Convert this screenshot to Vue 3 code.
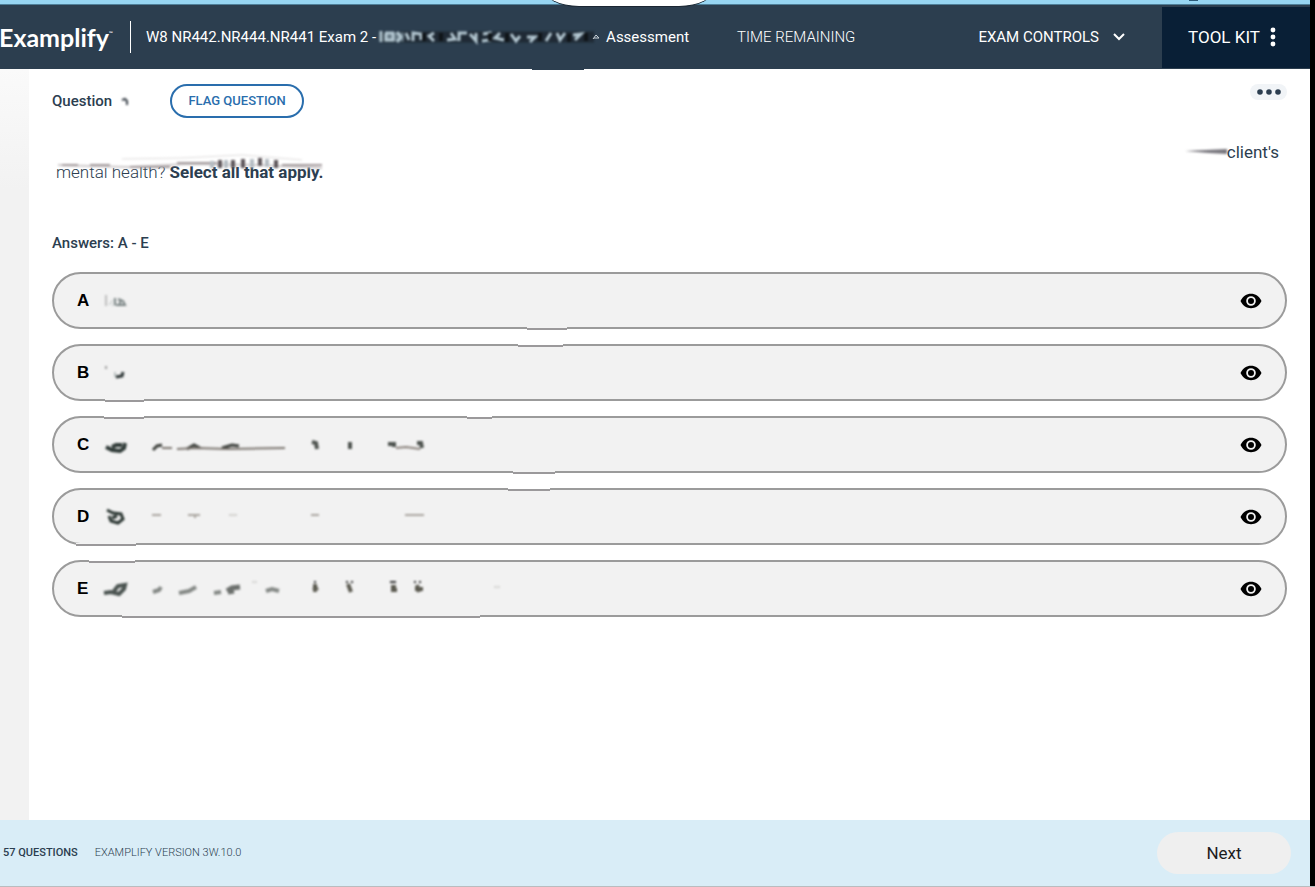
<script setup>
import { ref } from 'vue'

const selected = ref([])

// smears and shifted edges are drawn in the option's own coordinates, 57px tall
const options = [
	{
		letter: 'A',
		edges: [{ x: 475, width: 40, side: 'bottom' }],
		marks: [
			{ d: 'M54 23v11', w: 1, c: '#888' },
			{ d: 'M57 33l4-5M60 33h5', w: 2, c: '#d4d8d8' },
			{ d: 'M63 26v7M66 27l5 2 2 4-9 0M68 28v4', w: 2, c: '#7b8585' },
		],
	},
	{
		letter: 'B',
		edges: [
			{ x: 53, width: 39, side: 'bottom' },
			{ x: 466, width: 45, side: 'top' },
		],
		marks: [
			{ d: 'M54 22v3', w: 1, c: '#555' },
			{ d: 'M63 28v5', w: 2, c: '#bcc4c4' },
			{ d: 'M64 33l6-1 1-4', w: 3, c: '#2e3737' },
		],
	},
	{
		letter: 'C',
		edges: [
			{ x: 52, width: 40, side: 'top' },
			{ x: 415, width: 25, side: 'top' },
			{ x: 461, width: 42, side: 'bottom' },
		],
		marks: [
			{ d: 'M54 31l6 3 8 1 4-3 1-5M60 31l4-2h6', w: 4, c: '#2f3a37' },
			{ d: 'M101 34l4-4 5-1M135 33l7-4 6 3M170 32l10-3 7 1', w: 3, c: '#3f423e' },
			{ d: 'M110 32h10M125 33l20-1 30 1 58-1', w: 2, c: '#7c7670' },
			{ d: 'M260 26l4 1 1 6M298 26v7M336 28h6v3M365 27h4l1 5', w: 4, c: '#4e534f' },
			{ d: 'M344 32l10-1 14 2', w: 2, c: '#8a827c' },
		],
	},
	{
		letter: 'D',
		edges: [
			{ x: 24, width: 60, side: 'bottom' },
			{ x: 456, width: 42, side: 'top' },
		],
		marks: [
			{ d: 'M55 22l6 3 8 1 2 5-5 4-7-2-2-5M60 30l5-2', w: 3, c: '#2c3733' },
			{ d: 'M100 27h9M136 27h12M142 29h2M259 27h8M353 27h19', w: 2, c: '#a9a59f' },
			{ d: 'M177 27h8', w: 1, c: '#b5b2ad' },
		],
	},
	{
		letter: 'E',
		edges: [
			{ x: 37, width: 46, side: 'top' },
			{ x: 70, width: 358, side: 'bottom' },
		],
		marks: [
			{ d: 'M52 33l7-1 8 2 5-5 1-4-7 1-4 5', w: 4, c: '#4a5350' },
			{ d: 'M101 32l6-2 2-3M127 33l10-2 7-4M162 33l7-1M214 31l6-2 7 2', w: 4, c: '#858986' },
			{ d: 'M175 31l5-3 8-1M176 32l6-1', w: 5, c: '#6c706d' },
			{ d: 'M263 24v8M261 30l5-2M296 24l3 8M339 27h5M339 30h6M365 25l2 7M363 29h8', w: 4, c: '#5b5a50' },
			{ d: 'M262 22h2M294 22h2M299 22h2M338 22h6M362 22h2M367 22h2', w: 2, c: '#333' },
			{ d: 'M200 22h5M442 27h6', w: 1, c: '#bfbfbc' },
		],
	},
]
</script>

<template>
	<div class="page">
		<div class="window">
			<div class="top-strip">
				<span class="notch"></span>
				<span class="speck"></span>
			</div>

			<header class="header">
				<div class="brand">Examplify<sup class="tm">™</sup></div>
				<h1 class="title">
					<span>W8 NR442.NR444.NR441 Exam 2 -</span>
					<svg class="title-smear" viewBox="0 0 222 24" aria-hidden="true">
						<g class="soft" fill="none">
							<path d="M2 12h212" stroke="#1f2a35" stroke-width="11" />
							<path d="M4 12h20" stroke="#61737f" stroke-width="9" />
							<path
								d="M1 6v11M5 8h8v7H6V9M17 7l4 5-4 5M26 8l3 7M33 16V8l8 1v6M54 8l-5 3 5 5M67 15l8-1-4-6M79 16V8h8M90 9l6 7V8M103 9l7-1v7l-8 1M120 8l-5 5 9 2M131 9l5 7 4-5M147 12h8l-5 5M166 16l5-8M177 8l3 7 5-7M193 10l8-1-6 6"
								stroke="#b4c8d2"
								stroke-width="3"
							/>
							<path d="M44 8v8M61 8v8M110 8v8M127 8v9M160 8v8M189 9v8M206 8v8" stroke="#0f1418" stroke-width="4" />
						</g>
						<path d="M213 14l3-4 3 3h-5" fill="none" stroke="#c8d0d6" stroke-width="1" />
					</svg>
					<span>Assessment</span>
				</h1>
				<div class="time">TIME REMAINING</div>
				<button class="controls" type="button">
					EXAM CONTROLS
					<svg width="12" height="8" viewBox="0 0 12 8" aria-hidden="true">
						<path d="M1 1l5 5 5-5" fill="none" stroke="#fff" stroke-width="2" />
					</svg>
				</button>
				<button class="toolkit" type="button">
					TOOL KIT
					<svg width="6" height="20" viewBox="0 0 6 20" aria-hidden="true">
						<circle cx="3" cy="3" r="2.4" />
						<circle cx="3" cy="10" r="2.4" />
						<circle cx="3" cy="17" r="2.4" />
					</svg>
				</button>
				<span class="header-drip"></span>
			</header>

			<div class="body">
				<aside class="rail"></aside>
				<main class="main">
					<div class="question-bar">
						<h2 class="question-label">Question</h2>
						<svg class="number-smear" width="8" height="10" viewBox="0 0 8 10" aria-hidden="true">
							<path d="M1 4l3-1 2 2v4" fill="none" stroke="#3a424a" stroke-width="2" />
						</svg>
						<button class="flag" type="button">FLAG QUESTION</button>
						<button class="more" type="button" aria-label="More options">
							<svg width="24" height="6" viewBox="0 0 24 6" aria-hidden="true">
								<circle cx="3" cy="3" r="2.800" />
								<circle cx="12" cy="3" r="2.800" />
								<circle cx="21" cy="3" r="2.800" />
							</svg>
						</button>
					</div>

					<div class="prompt">
						<p class="prompt-end">
							<svg width="44" height="12" viewBox="0 0 44 12" aria-hidden="true">
								<path class="soft" d="M2 5l20-1 22-1v5l-18-1z" fill="#77757c" />
							</svg>
							<span>client's</span>
						</p>
						<p class="prompt-last">mental health? <strong>Select all that apply.</strong></p>
						<svg class="prompt-smear" width="290" height="24" viewBox="0 0 290 24" aria-hidden="true">
							<path d="M0 0h290v17l-40-1-60 0-70-1-60 2-60-1z" fill="#fff" />
							<g class="soft" fill="none">
								<path d="M6 14l30 1 40 1 60-3 70 1 64 3" stroke="#cfcbcc" stroke-width="2" />
								<path d="M70 8l60-1 60-3 60 5" stroke="#dedcdc" stroke-width="1" />
								<path d="M10 14h16M38 14h20M78 16h40M125 12h40M230 14h40" stroke="#a39a9c" stroke-width="2" />
								<path d="M168 9v8M181 9v8M191 8v9M208 7v8M224 9v8" stroke="#5c5458" stroke-width="4" />
								<path d="M160 10v7M174 9v8M200 8v9M215 8v8" stroke="#b4bcc2" stroke-width="4" />
							</g>
						</svg>
					</div>

					<h3 class="answers-label">Answers: A - E</h3>

					<ul class="options">
						<li v-for="option in options" :key="option.letter" class="option">
							<label class="choice">
								<input v-model="selected" type="checkbox" class="tick" :value="option.letter" />
								<span class="letter">{{ option.letter }}</span>
							</label>
							<button class="eye" type="button" :aria-label="`Hide answer ${option.letter}`">
								<svg width="22" height="16" viewBox="0 0 22 16" aria-hidden="true">
									<path d="M0.500 8C3 3 6.500 0.800 11 0.800S19 3 21.500 8C19 13 15.500 15.200 11 15.200S3 13 0.500 8z" />
									<circle cx="11" cy="8" r="3.900" fill="none" stroke="#f2f2f2" stroke-width="1.800" />
								</svg>
							</button>
							<svg class="smear" width="620" height="57" viewBox="0 0 620 57" aria-hidden="true">
								<g v-for="edge in option.edges" :key="edge.x">
									<rect
										:x="edge.x"
										:y="edge.side === 'top' ? 0 : 55"
										:width="edge.width"
										height="2"
										:fill="edge.side === 'top' ? '#fff' : '#f3f3f3'"
									/>
									<rect :x="edge.x" :y="edge.side === 'top' ? 1 : 56" :width="edge.width" height="2" fill="#9b999b" />
								</g>
								<g class="soft">
									<path
										v-for="mark in option.marks"
										:key="mark.d"
										:d="mark.d"
										fill="none"
										:stroke="mark.c"
										:stroke-width="mark.w"
									/>
								</g>
							</svg>
						</li>
					</ul>
				</main>
			</div>

			<footer class="footer">
				<span class="count">57 QUESTIONS</span>
				<span class="version">EXAMPLIFY VERSION 3W.10.0</span>
				<button class="next" type="button">Next</button>
			</footer>
		</div>
	</div>
</template>

<style>
body {
	margin: 0;
	background: #fff;
}
</style>

<style scoped>
.page {
	box-sizing: border-box;
	display: flex;
	flex-direction: column;
	min-height: 100vh;
	border-bottom: 1px solid #b9bcbf;
	font-family: Roboto, 'Liberation Sans', sans-serif;
	font-size: 15px;
	line-height: 20px;
	color: #2c3e50;
	overflow-x: hidden;
}

.window {
	flex: 1;
	display: flex;
	flex-direction: column;
	border-right: 5px solid #000;
}

button {
	font: inherit;
	color: inherit;
	padding: 0;
	border: 0;
	background: none;
	cursor: pointer;
}

h1,
h2,
h3,
p,
ul {
	margin: 0;
	padding: 0;
}

svg {
	flex: none;
	overflow: visible;
}

.soft {
	filter: blur(1px);
}

.top-strip {
	position: relative;
	height: 4px;
	background: #97d5f2;
	border-bottom: 1px solid #4f7f99;
}

.notch {
	position: absolute;
	z-index: 1;
	top: -34px;
	left: 543px;
	width: 172px;
	height: 40px;
	border-bottom: 1px solid #1b2733;
	border-radius: 0 0 36px 36px / 0 0 20px 20px;
	background: #fff;
}

.speck {
	position: absolute;
	top: 0;
	right: 112px;
	width: 9px;
	height: 1px;
	background: #2c5a78;
}

.header {
	position: relative;
	display: flex;
	align-items: center;
	height: 64px;
	background: #2c3e4f;
	color: #fff;
}

.brand {
	box-sizing: border-box;
	flex: none;
	width: 132px;
	height: 32px;
	margin-left: -1px;
	border-right: 1px solid #fff;
	font-family: Lato, sans-serif;
	font-weight: 700;
	font-size: 25px;
	line-height: 32px;
	white-space: nowrap;
}

.tm {
	font-size: 5px;
	line-height: 0;
	vertical-align: 12px;
}

.title {
	display: flex;
	align-items: center;
	gap: 4px;
	margin-left: 15px;
	font-size: 15px;
	font-weight: 400;
	white-space: nowrap;
}

.title-smear {
	width: 222px;
	height: 24px;
}

.time {
	margin-left: 48px;
	font-weight: 300;
	white-space: nowrap;
}

.controls {
	display: flex;
	align-items: center;
	gap: 14px;
	margin-left: auto;
	margin-right: 37px;
	white-space: nowrap;
}

.toolkit {
	display: flex;
	align-items: center;
	justify-content: center;
	gap: 10px;
	width: 148px;
	height: 61px;
	padding-right: 8px;
	background: #091f36;
	font-size: 17px;
	white-space: nowrap;
}

.toolkit svg {
	fill: #fff;
}

.header-drip {
	position: absolute;
	left: 532px;
	top: 64px;
	width: 52px;
	height: 1px;
	background: #2c3e4f;
}

.body {
	flex: 1;
	display: flex;
}

.rail {
	flex: none;
	width: 29px;
	background: linear-gradient(#fafafa, #f2f2f2 120px);
}

.main {
	flex: 1;
	min-width: 0;
	padding: 15px 23px 24px;
}

.question-bar {
	display: flex;
	align-items: center;
}

.question-label {
	font-size: 15px;
	font-weight: 500;
}

.number-smear {
	margin-left: 9px;
	filter: blur(1px);
}

.flag {
	margin-left: 41px;
	width: 134px;
	height: 34px;
	border: 2px solid #2a6ead;
	border-radius: 17px;
	color: #2a6ead;
	font-size: 13px;
	font-weight: 500;
	white-space: nowrap;
}

.more {
	display: flex;
	align-items: center;
	justify-content: center;
	align-self: flex-start;
	width: 37px;
	height: 16px;
	margin-left: auto;
	border-radius: 8px;
	background: #f1f4f7;
}

.more svg {
	fill: #2c3e50;
}

.prompt {
	position: relative;
	margin-top: 24px;
	padding: 0 8px 0 4px;
	font-size: 17px;
}

.prompt-end {
	display: flex;
	align-items: center;
	justify-content: flex-end;
}

.prompt-last {
	font-weight: 300;
}

.prompt-last strong {
	font-weight: 700;
}

.prompt-smear {
	position: absolute;
	top: 9px;
	left: 0;
}

.answers-label {
	margin: 51px 0 19px;
	font-size: 15px;
	font-weight: 500;
}

.options {
	display: flex;
	flex-direction: column;
	gap: 15px;
	list-style: none;
}

.option {
	position: relative;
	box-sizing: border-box;
	display: flex;
	align-items: center;
	justify-content: space-between;
	height: 57px;
	padding: 0 23px;
	border: 2px solid #9b9b9b;
	border-radius: 29px;
	background: #f2f2f2;
}

.choice {
	flex: 1;
	cursor: pointer;
}

.tick {
	position: absolute;
	opacity: 0;
	pointer-events: none;
}

.letter {
	font-family: 'Liberation Sans', Arial, sans-serif;
	font-size: 17px;
	font-weight: 700;
	color: #000;
}

.eye {
	display: flex;
}

.smear {
	position: absolute;
	top: -2px;
	left: -2px;
	pointer-events: none;
}

.footer {
	display: flex;
	align-items: center;
	height: 66px;
	padding: 0 19px 0 3px;
	background: #d9edf7;
	font-size: 11px;
}

.count {
	font-weight: 500;
}

.version {
	margin-left: 17px;
	font-weight: 300;
}

.next {
	width: 134px;
	height: 42px;
	margin-left: auto;
	border-radius: 21px;
	background: #efefef;
	color: #1c1c1c;
	font-size: 17px;
}
</style>
